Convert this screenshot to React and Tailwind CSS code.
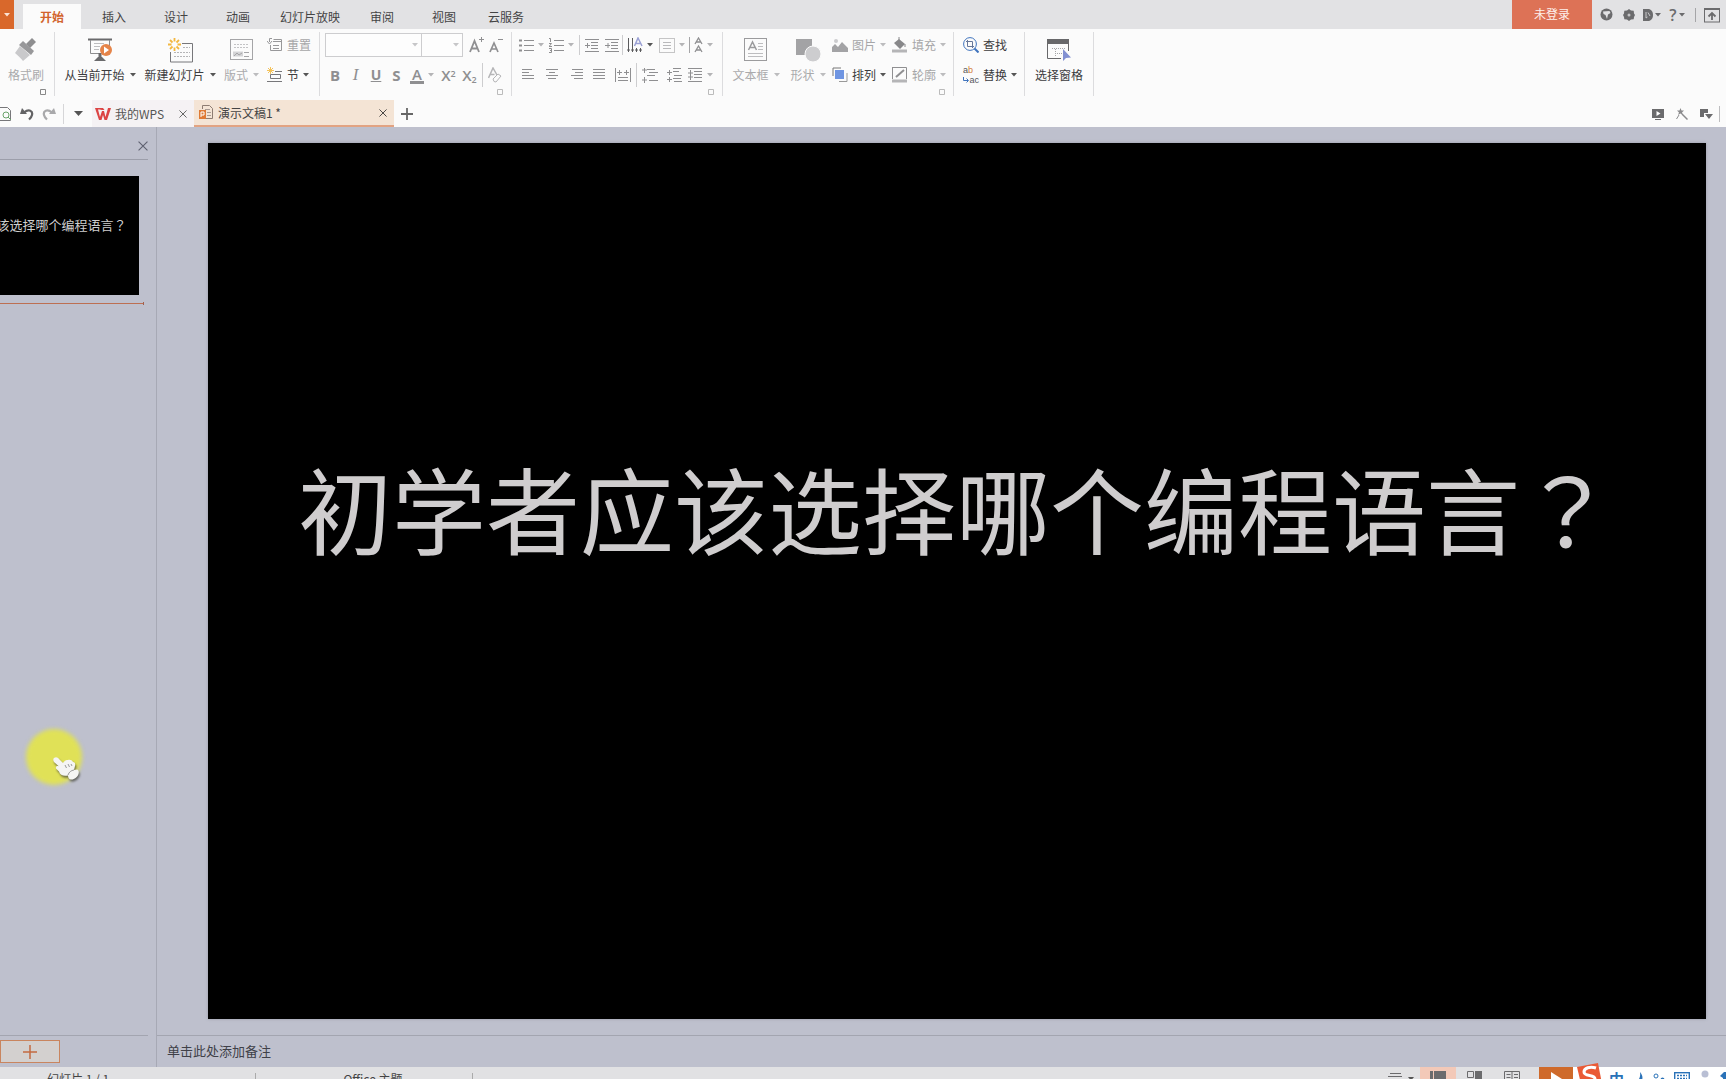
import React from 'react';

const Caret = ({ className = 'text-[#b4b4b6]' }) => (
  <svg viewBox="0 0 6 4" className={`h-[4px] w-[6px] shrink-0 ${className}`}>
    <path d="M0 0h6L3 3.6z" fill="currentColor" />
  </svg>
);

const Svg = ({ w = 16, h = 16, className = '', children }) => (
  <svg width={w} height={h} viewBox={`0 0 ${w} ${h}`} fill="none" stroke="currentColor" className={`shrink-0 ${className}`}>
    {children}
  </svg>
);

const Cell = ({ label, w, className = '', children }) => (
  <button aria-label={label} className={`flex h-6 shrink-0 items-center justify-center gap-[4px] ${w} ${className}`}>
    {children}
  </button>
);

const Lines = ({ rows }) => (
  <Svg w={14} h={14}>
    {rows.map(([a, b], i) => (
      <path key={i} d={`M${a} ${1.5 + i * 3}H${b}`} />
    ))}
  </Svg>
);

const Sep = ({ className = 'h-5 bg-[#cdcdcf]' }) => <span className={`w-px shrink-0 ${className}`} />;

const Launcher = ({ className = 'text-[#bbb]' }) => (
  <button aria-label="更多设置" className={`absolute bottom-px right-[8px] ${className}`}>
    <Svg w={6} h={6}>
      <path d="M.5 5.500V.5h5v5H.5" />
    </Svg>
  </button>
);

const Group = ({ w, children }) => (
  <section className={`relative flex h-16 shrink-0 border-r border-[#dcdcde] ${w}`}>{children}</section>
);

const Big = ({ w, icon, label, caret, muted }) => (
  <button className={`flex shrink-0 flex-col items-center pt-[5px] ${w} ${muted ? 'text-[#aaaaac]' : 'text-[#3c3c3e]'}`}>
    <span className="flex h-[26px] items-center">{icon}</span>
    <span className="flex h-6 items-center gap-[5px] whitespace-nowrap">
      {label}
      {caret && <Caret className={muted ? 'text-[#bcbcbe]' : 'text-[#555]'} />}
    </span>
  </button>
);

const Small = ({ icon, label, caret, muted }) => (
  <button className={`flex h-6 items-center gap-[4px] whitespace-nowrap ${muted ? 'text-[#a6a6a8]' : 'text-[#3c3c3e]'}`}>
    {icon}
    {label}
    {caret && <Caret className={muted ? 'text-[#bcbcbe]' : 'text-[#555]'} />}
  </button>
);

const Sun = () => (
  <g stroke="#f3b73f" strokeWidth="1.800">
    <path d="M6.500 0v3.500M6.500 9.500v3.500M0 6.500h3.500M9.500 6.500h3.500M2 2l2.500 2.500M8.500 8.500L11 11M11 2L8.500 4.500M4.500 8.500L2 11" />
  </g>
);

const Cross = ({ className = 'text-[#555]', s = 9 }) => (
  <svg width={s} height={s} viewBox="0 0 9 9" fill="none" stroke="currentColor" className={className}>
    <path d="M.5.5l8 8M8.500.5l-8 8" />
  </svg>
);

function TitleTabs() {
  const tabs = ['插入', '设计', '动画', '幻灯片放映', '审阅', '视图', '云服务'];
  return (
    <header className="flex h-[29px] shrink-0 bg-[#e2e2e4] text-[#444]">
      <button aria-label="应用菜单" className="flex w-[14px] items-center justify-center bg-[#d9682b]">
        <Caret className="text-[#fbe3d5]" />
      </button>
      <nav className="ml-[7px] flex flex-1">
        <button className="mx-[2px] mt-1 w-[58px] bg-[#fbfbfb] font-bold text-[#d2642d]">开始</button>
        {tabs.map((t) => (
          <button key={t} className="min-w-[62px] whitespace-nowrap px-[11px] pt-1">
            {t}
          </button>
        ))}
      </nav>
      <button className="w-20 bg-[#dd7256] pb-[2px] text-[#fdf0eb]">未登录</button>
      <div className="flex items-center pl-[2px] text-[#6b6b6d]">
        <button aria-label="换肤" className="flex w-6 justify-center">
          <Svg w={13} h={13}>
            <circle cx="6.500" cy="6.500" r="6" fill="currentColor" stroke="none" />
            <path d="M3 3.500l6.500-.5 1 2-2.500 1.500L7 11 5.500 7 3.500 6z" fill="#e2e2e4" stroke="none" />
          </Svg>
        </button>
        <button aria-label="设置" className="flex w-[22px] justify-center">
          <Svg w={12} h={12}>
            <path d="M6 0l2 1.500 2.700.3.300 2.700L12 6l-1 2-.3 2.200-2.700.3L6 12l-2-1.500-2.700-.3L1 8 0 6l1-1.500.3-2.700L4 1.500z" fill="currentColor" stroke="none" />
            <circle cx="6" cy="6" r="1.500" fill="#c4c4c6" stroke="none" />
          </Svg>
        </button>
        <button aria-label="文档中心" className="flex w-6 items-center justify-center gap-[2px]">
          <Svg w={10} h={12}>
            <path d="M0 0h5c3 0 5 2.500 5 6s-2 6-5 6H0z" fill="currentColor" stroke="none" />
            <path d="M3 3v6l1.500-1M5 3.500L7 7" stroke="#c9c9cb" />
          </Svg>
          <Caret className="text-[#6b6b6d]" />
        </button>
        <button aria-label="帮助" className="flex w-[26px] items-center justify-center gap-[2px]">
          <span className="font-['Open_Sans',sans-serif] text-[16px] font-semibold leading-5">?</span>
          <Caret className="text-[#6b6b6d]" />
        </button>
        <Sep className="ml-[5px] mr-2 h-[14px] bg-[#a5a5a7]" />
        <button aria-label="隐藏功能区" className="mr-[6px]">
          <Svg w={16} h={16}>
            <rect x=".5" y="1.500" width="15" height="13.500" />
            <path d="M0 2h16" strokeWidth="2" />
            <path d="M8 13V7M4.500 9.500L8 6l3.500 3.500" strokeWidth="1.800" />
          </Svg>
        </button>
      </div>
    </header>
  );
}

function Ribbon() {
  return (
    <div className="flex h-[71px] shrink-0 overflow-hidden bg-[#fbfbfb] pt-[3px]">
      <Group w="w-[55px]">
        <Big
          w="w-[52px]"
          muted
          label="格式刷"
          icon={
            <Svg w={24} h={24}>
              <path d="M18 0l4 4-6 6-4-4z" fill="#8e8e90" stroke="none" />
              <path d="M9 3l11 10-3 4L5 7z" fill="#98989a" stroke="none" />
              <path d="M6 8l10 9-7 6C7 20 4 18 1 15z" fill="#c9c9cb" stroke="none" />
            </Svg>
          }
        />
        <Launcher className="text-[#888]" />
      </Group>

      <Group w="w-[265px]">
        <div className="flex pl-[5px]">
          <Big
            w="w-20"
            label="从当前开始"
            caret
            icon={
              <Svg w={24} h={24} className="text-[#6a6a6c]">
                <path d="M0 1.500h24" strokeWidth="2" />
                <path d="M2.500 2v13.500h19V2" stroke="#8d8d8f" />
                <path d="M6 5.500h10M6 8.500h6M6 11.500h5" stroke="#bdbdbf" />
                <path d="M12 15v5" strokeWidth="3" />
                <path d="M6 23l4-4h4l4 4z" fill="currentColor" stroke="none" />
                <circle cx="18" cy="12" r="6" fill="#e58449" stroke="none" />
                <path d="M16 8.500l5 3.500-5 3.500z" fill="#fff" stroke="none" />
              </Svg>
            }
          />
          <Big
            w="w-20"
            label="新建幻灯片"
            caret
            icon={
              <Svg w={25} h={25}>
                <path d="M14 5.500h10.500V24H2.500V14" stroke="#77777a" />
                <path d="M15 9.500h7M6 14.500h16M6 18.500h16" stroke="#b5b5b7" strokeDasharray="2 1" />
                <Sun />
              </Svg>
            }
          />
          <Big
            w="w-[43px]"
            muted
            label="版式"
            caret
            icon={
              <Svg w={24} h={22} className="text-[#a5a5a7]">
                <rect x=".5" y=".5" width="22" height="20" />
                <path d="M4 5.500h15M4 8.500h15" strokeDasharray="2 1" stroke="#c3c3c5" />
                <path d="M3 12.500h10v5H3z" fill="#d4d4d6" stroke="none" />
                <path d="M4 17l3-3 2 2 3-2M14 13.500h5M14 17.500h5" />
              </Svg>
            }
          />
        </div>
        <div className="ml-[4px] flex flex-col gap-[6px] pt-px">
          <Small
            muted
            label="重置"
            icon={
              <Svg w={16} h={16} className="text-[#98989a]">
                <path d="M6.500 2.500h8v11h-11V8M6 4.500h8" />
                <path d="M5 1.500H2.500V5M0 4l2.500 3L5 4M6 8.500h6M6 11.500h6" />
              </Svg>
            }
          />
          <Small
            label="节"
            caret
            icon={
              <Svg w={16} h={16} className="text-[#77777a]">
                <path d="M8 4.500h7M3.500 7.500h10v4h-10zM0 14.500h15" />
                <path d="M3.500 0v7M0 3.500h7M1 1l5 5M6 1L1 6" stroke="#f3c25a" />
              </Svg>
            }
          />
        </div>
      </Group>

      <Group w="w-[192px]">
        <div className="flex w-full flex-col gap-[6px] pl-[5px] pt-px text-[#9b9b9d]">
          <div className="flex h-6 items-center">
            <span className="relative">
              <select aria-label="字体" className="block h-6 w-[97px] appearance-none border border-[#cdcdcf] bg-[#fdfdfd]">
                <option></option>
              </select>
              <Caret className="pointer-events-none absolute right-[4px] top-[10px] text-[#c6c6c8]" />
            </span>
            <span className="relative">
              <select aria-label="字号" className="block h-6 w-[41px] appearance-none border border-l-0 border-[#cdcdcf] bg-[#fdfdfd]">
                <option></option>
              </select>
              <Caret className="pointer-events-none absolute right-[4px] top-[10px] text-[#c6c6c8]" />
            </span>
            <Cell label="增大字号" w="ml-[3px] w-5">
              <Svg w={15} h={16} className="text-[#8f8f91]">
                <path d="M1 15L5.500 4 10 15M2.500 11.500h6" strokeWidth="1.800" />
                <path d="M12.500 0v5M10 2.500h5" />
              </Svg>
            </Cell>
            <Cell label="减小字号" w="w-5">
              <Svg w={15} h={16} className="text-[#8f8f91]">
                <path d="M1 15L5 6l4 9M2.500 12h5" strokeWidth="1.700" />
                <path d="M9 2.500h5" />
              </Svg>
            </Cell>
          </div>
          <div className="flex h-6 items-center font-['Open_Sans',sans-serif] text-[15px] text-[#8f8f91]">
            <Cell label="加粗" w="w-5"><b>B</b></Cell>
            <Cell label="倾斜" w="w-[21px]"><i className="font-['Liberation_Serif',serif] text-[17px]">I</i></Cell>
            <Cell label="下划线" w="w-5"><u className="text-[14px] font-bold">U</u></Cell>
            <Cell label="阴影" w="w-[21px]"><span className="font-bold">S</span></Cell>
            <Cell label="字体颜色" w="w-[30px]">
              <span className="flex h-[17px] items-end border-b-[3px] border-[#8f8f91] px-[2px] font-semibold leading-[14px]">A</span>
              <Caret />
            </Cell>
            <Cell label="上标" w="w-[23px]"><span className="font-semibold">X<sup className="text-[9px]">2</sup></span></Cell>
            <Cell label="下标" w="w-[19px]"><span className="font-semibold">X<sub className="text-[9px]">2</sub></span></Cell>
            <Sep className="ml-[3px] h-6 bg-[#cdcdcf]" />
            <Cell label="清除格式" w="w-6">
              <Svg w={14} h={16} className="text-[#b5b5b7]">
                <path d="M.5 11L5 1l4 7M2.500 7.500h4" strokeWidth="1.500" />
                <path d="M5 12l5-5 3 2-5 6-2-.5z" />
              </Svg>
            </Cell>
          </div>
        </div>
        <Launcher />
      </Group>

      <Group w="w-[211px]">
        <div className="flex w-full flex-col gap-[6px] pl-[4px] pt-px text-[#8f8f91]">
          <div className="flex h-6 items-center">
            <Cell label="项目符号" w="w-[30px]">
              <Svg w={15} h={14}>
                <path d="M5 2.500h10M5 7.500h10M5 12.500h10" />
                <path d="M0 2.500h3M0 7.500h3M0 12.500h3" strokeWidth="2" />
              </Svg>
              <Caret />
            </Cell>
            <Cell label="编号" w="w-[30px]">
              <Svg w={15} h={16}>
                <path d="M5 3.500h10M5 8.500h10M5 13.500h10" />
                <path d="M0 1.500h1.500V5M0 6.500h2.500L0 9.500h3M0 11.500h2.500v4H0M1 13.500h1" />
              </Svg>
              <Caret />
            </Cell>
            <Sep className="ml-[3px] h-5 bg-[#cdcdcf]" />
            <Cell label="减少缩进量" w="w-[23px]">
              <Svg w={14} h={15}>
                <path d="M0 1.500h14M6 4.500h7M6 7.500h7M6 10.500h7M0 13.500h14M0 7.500h5M2.500 5v5" />
              </Svg>
            </Cell>
            <Cell label="增加缩进量" w="w-[18px]">
              <Svg w={14} h={15}>
                <path d="M0 1.500h14M6 4.500h7M6 7.500h7M6 10.500h7M0 13.500h14M0 7.500h5M3 5v5" />
              </Svg>
            </Cell>
            <Sep className="ml-px h-5 bg-[#cdcdcf]" />
            <Cell label="文字方向" w="w-[34px]">
              <Svg w={16} h={16} className="text-[#5a5a5c]">
                <path d="M1.500 1v14M5.500 1v14M9.500 11v4M13.500 11v4M0 13h3M4 13h3M8 13h3M12 13h3" />
                <path d="M7.500 9l3.500-8 4 8M9 6.500h5" stroke="#9aa0d4" strokeWidth="1.500" />
              </Svg>
              <Caret className="text-[#555]" />
            </Cell>
            <Cell label="对齐文本" w="w-[30px]">
              <Svg w={16} h={15}>
                <rect x=".5" y=".5" width="15" height="14" strokeDasharray="1 1" />
                <path d="M4 4.500h8M4 7.500h8M4 10.500h8" stroke="#b9b9bb" />
              </Svg>
              <Caret />
            </Cell>
            <Sep className="ml-[2px] h-4 bg-[#a5a5a7]" />
            <Cell label="字符间距" w="w-[26px]">
              <Svg w={9} h={16}>
                <path d="M1 7l3.500-6L8 7M2.500 5h4M1 15l3.500-6L8 15M2.500 13h4" strokeWidth="1.300" />
              </Svg>
              <Caret />
            </Cell>
          </div>
          <div className="flex h-6 items-center">
            <Cell label="左对齐" w="w-6"><Lines rows={[[1, 11], [1, 8], [1, 13], [1, 13]]} /></Cell>
            <Cell label="居中" w="w-6"><Lines rows={[[1, 13], [4, 10], [1, 13], [3, 11]]} /></Cell>
            <Cell label="右对齐" w="w-[25px]"><Lines rows={[[2, 13], [5, 13], [1, 13], [4, 13]]} /></Cell>
            <Cell label="两端对齐" w="w-5"><Lines rows={[[1, 13], [1, 13], [1, 13], [1, 13]]} /></Cell>
            <Cell label="分散对齐" w="w-[27px]">
              <Svg w={16} h={14}>
                <path d="M.5 0v14M15.500 0v14M3 9.500h10M3 12.500h10M2 4.500h5M9 4.500h5M4.500 2v5M11.500 2v5" />
              </Svg>
            </Cell>
            <Sep className="h-6 bg-[#cdcdcf]" />
            <Cell label="行距" w="w-[26px]">
              <Svg w={16} h={16}>
                <path d="M5 2.500h8M7 5.500h9M5 8.500h8M7 13.500h9M2.500 1v5M0 3h5M2.500 10v6M0 13h5" />
              </Svg>
            </Cell>
            <Cell label="段落间距" w="w-[23px]">
              <Svg w={16} h={16}>
                <path d="M6 1.500h8M6 4.500h6M7 8.500h8M6 11.500h8M7 14.500h8M2.500 3v5M0 5.500h5M2.500 10v5M0 12.500h5" />
              </Svg>
            </Cell>
            <Cell label="调整间距" w="w-[29px]">
              <Svg w={15} h={16}>
                <path d="M0 1.500h14M6 4.500h8M6 7.500h8M6 10.500h8M0 14.500h14M2.500 3v10M0 6h5M0 10h5" />
              </Svg>
              <Caret />
            </Cell>
          </div>
        </div>
        <Launcher />
      </Group>

      <Group w="w-[231px]">
        <Big
          w="w-[66px]"
          muted
          label="文本框"
          caret
          icon={
            <Svg w={24} h={24} className="text-[#9b9b9d]">
              <rect x=".5" y=".5" width="22" height="22" />
              <path d="M4.500 12l4-8 4 8M6 9.500h5" strokeWidth="1.500" />
              <path d="M14 5.500h5M14 8.500h5M14 11.500h5M4 15.500h15M4 18.500h15" stroke="#bdbdbf" />
            </Svg>
          }
        />
        <Big
          w="w-[38px]"
          muted
          label="形状"
          caret
          icon={
            <Svg w={25} h={24}>
              <path d="M0 1h16v16H0z" fill="#a3a3a5" stroke="none" />
              <circle cx="17" cy="16" r="8" fill="#cdcdcf" stroke="#fbfbfb" />
            </Svg>
          }
        />
        <div className="ml-[5px] flex flex-col gap-[6px] pt-px">
          <Small
            muted
            label="图片"
            caret
            icon={
              <Svg w={16} h={15}>
                <circle cx="4" cy="3" r="2" fill="#ccccce" stroke="none" />
                <path d="M0 14V9l3-3 3 3 4-5 6 6v4z" fill="#a3a3a5" stroke="none" />
              </Svg>
            }
          />
          <Small
            label="排列"
            caret
            icon={
              <Svg w={16} h={16}>
                <path d="M1 9V1h8" stroke="#777" />
                <path d="M7 14.500h8V6" stroke="#999" />
                <path d="M3 3h9v9H3z" fill="#6f95e2" stroke="none" />
              </Svg>
            }
          />
        </div>
        <div className="ml-[6px] flex flex-col gap-[6px] pt-px">
          <Small
            muted
            label="填充"
            caret
            icon={
              <Svg w={16} h={16}>
                <path d="M2 6l5-4 6 5-5 5z" fill="#88888a" stroke="none" />
                <path d="M7 4V0M13 7v3" stroke="#88888a" />
                <path d="M0 14h15" strokeWidth="3" stroke="#b5b5b7" />
              </Svg>
            }
          />
          <Small
            muted
            label="轮廓"
            caret
            icon={
              <Svg w={16} h={16} className="text-[#8f8f91]">
                <path d="M0 .5h14.500V12M.5 0v12" />
                <path d="M4 10l8-7" strokeWidth="2" />
                <path d="M0 14h15" strokeWidth="3" stroke="#b5b5b7" />
              </Svg>
            }
          />
        </div>
        <Launcher />
      </Group>

      <Group w="w-[71px]">
        <div className="ml-[9px] flex flex-col gap-[6px] pt-px">
          <Small
            label="查找"
            icon={
              <Svg w={16} h={16} className="text-[#3f73bd]">
                <circle cx="7" cy="7" r="6.400" />
                <path d="M11.500 11.500l4 4" strokeWidth="2" />
                <path d="M4.500 3v6.500H11M3 4.500h6.500V11" stroke="#66779a" />
              </Svg>
            }
          />
          <Small
            label="替换"
            caret
            icon={
              <span className="flex w-4 flex-col font-['Liberation_Sans',sans-serif] text-[9px] leading-[10px] text-[#55555a]">
                <span className="text-left">a<span className="text-[#d57c3a]">b</span></span>
                <span className="flex items-center justify-end">
                  <Svg w={6} h={6} className="text-[#3f73bd]">
                    <path d="M.5 0v3.500H5M3.500 1.500l2 2-2 2" />
                  </Svg>
                  ac
                </span>
              </span>
            }
          />
        </div>
      </Group>

      <Group w="w-[69px]">
        <Big
          w="w-[68px]"
          label="选择窗格"
          icon={
            <Svg w={25} h={24} className="text-[#68686a]">
              <path d="M0 1h22v5H0z" fill="currentColor" stroke="none" />
              <path d="M.5 5v15.500H14M21.500 5v8" />
              <path d="M5 10.500h14M8.500 11v8M8 15.500h8" stroke="#a5a5a7" strokeDasharray="1 1" />
              <path d="M16 11v12l3-3 5-.5z" fill="#8290d2" stroke="none" />
            </Svg>
          }
        />
      </Group>
    </div>
  );
}

function DocumentTabs() {
  return (
    <div className="flex h-[27px] shrink-0 items-center bg-[#fbfbfb] text-[#555]">
      <button aria-label="打印预览" className="w-[13px]">
        <Svg w={12} h={16} className="text-[#77777a]">
          <path d="M0 1.500h7.500l3 3V14.500H0" />
          <circle cx="6" cy="9" r="3" stroke="#6aa36a" />
          <path d="M8 11l3 3" stroke="#6aa36a" />
        </Svg>
      </button>
      <button aria-label="撤消" className="flex w-[27px] justify-center">
        <Svg w={14} h={14} className="text-[#636365]">
          <path d="M4 5.500C9 1.500 13 4 12 8c-.4 2-1.500 3-3 4.500" strokeWidth="2.200" />
          <path d="M0 7l2-6 5 6z" fill="currentColor" stroke="none" />
        </Svg>
      </button>
      <button aria-label="恢复" className="flex w-[18px] justify-center">
        <Svg w={14} h={14} className="text-[#a9a9ab]">
          <path d="M10 5.500C5 1.500 1 4 2 8c.4 2 1.500 3 3 4.500" strokeWidth="2.200" />
          <path d="M14 7l-2-6-5 6z" fill="currentColor" stroke="none" />
        </Svg>
      </button>
      <Sep className="ml-[5px] h-5 bg-[#d6d6d8]" />
      <button aria-label="自定义快速访问工具栏" className="flex w-[28px] justify-center">
        <svg width="9" height="5" viewBox="0 0 9 5"><path d="M0 0h9L4.500 5z" fill="#555" /></svg>
      </button>
      <div className="flex h-full w-[102px] items-center bg-[#f5f2f4] pl-[3px]">
        <Svg w={16} h={12}>
          <path d="M0 0h8l1.500 2H7l-2.500-.5H3L5 9l2-6h2l1.500 6L13 0h3l-4 12H9.500L8 7l-1.500 5H4z" fill="#dc4444" stroke="none" />
        </Svg>
        <button className="ml-[4px] flex-1 whitespace-nowrap text-left">我的WPS</button>
        <button aria-label="关闭我的WPS" className="mr-[7px]"><Cross s={8} /></button>
      </div>
      <div className="flex h-full w-[200px] items-center border-b-2 border-[#e2a382] bg-[#f4e4d5] pl-[5px] text-[#444]">
        <Svg w={14} h={15}>
          <path d="M3.500 4V.5h7l3 3v10H7" stroke="#8d7c72" />
          <path d="M6 4.500h5M8 7.500h4M8 10.500h4" stroke="#a99c94" />
          <path d="M0 5h7v9H0z" fill="#df7a35" stroke="none" />
          <path d="M2 12V7h3v3H2" stroke="#fff" />
        </Svg>
        <button className="ml-[5px] flex-1 whitespace-nowrap text-left">演示文稿1 *</button>
        <button aria-label="关闭演示文稿1" className="mr-[7px]"><Cross s={8} className="text-[#333]" /></button>
      </div>
      <button aria-label="新建文档" className="ml-[7px] flex-none text-[#666]">
        <Svg w={12} h={12}><path d="M6 0v12M0 6h12" strokeWidth="1.800" /></Svg>
      </button>
      <div className="ml-auto flex items-center gap-3 text-[#6b6b6d]">
        <button aria-label="播放">
          <Svg w={12} h={12}>
            <path d="M0 1h12v9H0zM3 11h6v1H3z" fill="currentColor" stroke="none" />
            <path d="M4.500 3l4 2.500-4 2.500z" fill="#fff" stroke="none" />
          </Svg>
        </button>
        <button aria-label="美化">
          <Svg w={12} h={12} className="text-[#8b8b8d]">
            <path d="M4.500 0l1 2.500H8L6 4.500 7 7 4.500 5.500 2 7l1-2.500L1 2.500h2.500z" fill="currentColor" stroke="none" />
            <path d="M6 6l5.500 5.500" strokeWidth="1.500" />
            <path d="M3 7l-2.500 4" />
          </Svg>
        </button>
        <button aria-label="窗口">
          <Svg w={13} h={12}>
            <path d="M0 1h8v4H4v4H0zM5 6h8l-4 5z" fill="currentColor" stroke="none" />
          </Svg>
        </button>
      </div>
      <Sep className="ml-[6px] mr-[6px] h-4 bg-[#bdbdbf]" />
    </div>
  );
}

const TITLE = '初学者应该选择哪个编程语言';

function SlidePanel() {
  return (
    <aside className="flex w-[157px] shrink-0 flex-col overflow-hidden border-r border-[#a7a9b5]">
      <div className="mr-2 flex h-[33px] shrink-0 items-center justify-end border-b border-[#9c9eaa] pt-[6px]">
        <button aria-label="关闭窗格"><Cross s={10} className="text-[#5f6170]" /></button>
      </div>
      <div className="mt-4 flex flex-col items-end pr-[17px]">
        <button className="flex h-[119px] w-[205px] shrink-0 items-center justify-center whitespace-nowrap bg-black pb-[22px] pr-[2px] text-[13px] text-[#cfcfcf]">
          {TITLE}
          <span className="font-['Noto_Sans_CJK_TC',sans-serif]">？</span>
        </button>
      </div>
      <div className="mr-3 mt-[7px] flex h-[3px] items-center border-r border-[#a0604e]">
        <span className="h-px w-full bg-[#bd6f52]" />
      </div>
      <div className="mr-2 mt-auto flex h-8 items-center border-t border-[#a3a5b0]">
        <button aria-label="新建幻灯片" className="flex h-[23px] w-[60px] items-center justify-center border border-[#c9855f] bg-[#d3d0cf] text-[#c46a41]">
          <Svg w={14} h={14}><path d="M7 0v14M0 7h14" strokeWidth="1.500" /></Svg>
        </button>
      </div>
    </aside>
  );
}

function Pointer() {
  return (
    <div className="pointer-events-none absolute left-[26px] top-[729px]">
      <div className="h-[56px] w-[56px] rounded-full bg-[#e0e157] blur-[2px]" />
      <svg width="28" height="26" viewBox="0 0 28 26" className="absolute left-[27px] top-[28px] drop-shadow-[1px_2px_1px_rgba(60,60,60,.7)]">
        <path d="M1 1c2-1.500 4-.5 5 1l4 4c1-2 3-3.500 5-3 2-.5 4 0 5 2 2 0 2.500 2 2 4l-1 4 3-.5c4 1 1 10-6 10-2 0-3-2-3-4-4 1-8 0-9-4l-3-3c-.5-2 1-3 3-2L1 5C0 3.500 0 2 1 1z" fill="#f5f5f4" />
        <path d="M12 8l1.500 3M15 7l1.500 3M18 7l1 2M15 18c1-3 3-4.500 6-5" fill="none" stroke="#9a9a9c" />
      </svg>
    </div>
  );
}

function StatusBar() {
  return (
    <footer className="h-3 shrink-0 bg-[#e1e1e3] text-[#444]">
      <div className="flex h-6 items-center">
        <span className="w-[255px] pl-[47px]">幻灯片 1 / 1</span>
        <Sep className="h-3 bg-[#aaa]" />
        <span className="w-[216px] text-center"><span className="pl-[18px]">Office 主题</span></span>
        <Sep className="h-3 bg-[#aaa]" />
        <div className="ml-auto flex h-full items-center text-[#6b6b6d]">
          <button aria-label="备注" className="flex w-[38px] items-center justify-center gap-[6px]">
            <Svg w={14} h={14}><path d="M2 1.500h11M0 4.500h14M0 7.500h6M8 7.500h6M0 10.500h14" /></Svg>
            <Caret className="text-[#555]" />
          </button>
          <button aria-label="普通视图" className="flex h-full w-[36px] items-center justify-center bg-[#f3c9b8]">
            <Svg w={16} h={18}>
              <path d="M0 1h3v16H0zM4 1h12v16H4z" fill="currentColor" stroke="none" />
              <path d="M3.500 1v16" stroke="#f3c9b8" />
            </Svg>
          </button>
          <button aria-label="幻灯片浏览" className="flex w-[37px] items-center justify-center">
            <Svg w={16} h={18}>
              <path d="M.5 1.500h6v6h-6zM.5 10.500h6v6h-6zM9.500 10.500h6v6h-6z" />
              <path d="M8 1h7v8H8z" fill="currentColor" stroke="none" />
            </Svg>
          </button>
          <button aria-label="阅读视图" className="flex w-[37px] items-center justify-center">
            <Svg w={16} h={18}>
              <path d="M.5 1.500h15v14H.5zM8 2v14M2.500 4.500h4M2.500 7.500h4M10 4.500h4M10 7.500h4" />
            </Svg>
          </button>
          <button aria-label="放映" className="ml-[9px] flex h-full w-[34px] items-center justify-center bg-[#cf6a2b]">
            <Svg w={12} h={14}><path d="M1 0l11 7-11 7z" fill="#fff" stroke="none" /></Svg>
          </button>
          <div className="relative flex h-full w-[153px] items-center gap-[9px] bg-white pl-[36px] text-[#2a72b8]">
            <svg width="28" height="28" viewBox="0 0 28 28" className="absolute left-[3px] top-[-5px]">
              <path d="M1 5L22 1l4 21-20 4z" fill="#ea5a35" />
              <path d="M20 6c-6-2-12 0-12 4 0 5 11 2 11 7 0 3-6 4-10 2" fill="none" stroke="#fff" strokeWidth="3" />
            </svg>
            <span className="text-[15px] font-bold">中</span>
            <Svg w={11} h={14}><path d="M7 0c6 7 0 13-7 11C5 10 8 6 7 0z" fill="currentColor" stroke="none" /></Svg>
            <Svg w={12} h={12}>
              <circle cx="3" cy="3" r="2" />
              <circle cx="9.500" cy="6.500" r="2" fill="currentColor" stroke="none" />
            </Svg>
            <Svg w={16} h={14}>
              <rect x=".7" y=".7" width="14.600" height="12" strokeWidth="1.400" />
              <path d="M3 3.500h10M3 6.500h10M4 9.500h8" strokeDasharray="2 1" strokeWidth="1.500" />
            </Svg>
            <Svg w={12} h={18}>
              <circle cx="6" cy="4" r="3.500" fill="#b9bfd4" stroke="none" />
              <path d="M0 15c0-8 12-8 12 0z" fill="#8fb0d8" stroke="none" />
            </Svg>
            <Svg w={6} h={14}><path d="M0 4l4-4h2v14H3V6z" fill="currentColor" stroke="none" /></Svg>
          </div>
        </div>
      </div>
    </footer>
  );
}

export default function App() {
  return (
    <div className="relative flex h-screen flex-col overflow-hidden bg-[#bec0cd] font-['Noto_Sans_CJK_SC',sans-serif] text-[12px] leading-4">
      <TitleTabs />
      <Ribbon />
      <DocumentTabs />
      <div className="flex min-h-0 flex-1">
        <SlidePanel />
        <main className="flex min-w-0 flex-1 flex-col">
          <section className="mb-4 ml-[51px] mr-5 mt-4 flex flex-1 items-center justify-center bg-black pb-[148px] pr-[2px] shadow-[0_0_3px_#9a9ca8]">
            <h1 className="whitespace-nowrap text-[94px] leading-[136px] text-[#cfcdce]">
              {TITLE}
              <span className="font-['Noto_Sans_CJK_TC',sans-serif]">？</span>
            </h1>
          </section>
          <button className="h-8 shrink-0 border-t border-[#a3a5b0] pb-[2px] pl-[10px] text-left text-[13px] text-[#3f4048]">
            单击此处添加备注
          </button>
        </main>
      </div>
      <StatusBar />
      <Pointer />
    </div>
  );
}
